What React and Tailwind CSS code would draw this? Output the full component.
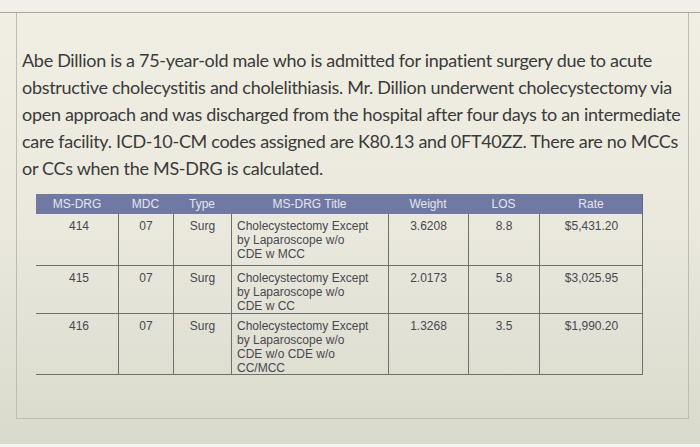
import React from "react";

const rows = [
  { drg: "414", mdc: "07", type: "Surg", title: ["Cholecystectomy Except", "by Laparoscope w/o", "CDE w MCC"], weight: "3.6208", los: "8.8", rate: "$5,431.20", h: "h-[52px]" },
  { drg: "415", mdc: "07", type: "Surg", title: ["Cholecystectomy Except", "by Laparoscope w/o", "CDE w CC"], weight: "2.0173", los: "5.8", rate: "$3,025.95", h: "h-[48px]" },
  { drg: "416", mdc: "07", type: "Surg", title: ["Cholecystectomy Except", "by Laparoscope w/o", "CDE w/o CDE w/o", "CC/MCC"], weight: "1.3268", los: "3.5", rate: "$1,990.20", h: "h-[61px]" },
];

const cols = "grid grid-cols-[82px_55px_58px_157px_80px_71px_104px]";

export default function App() {
  return (
    <div className="w-[700px] h-[447px] overflow-hidden bg-linear-to-b from-[#f1eee4] via-[#ebe9de] to-[#d9d9cc] flex flex-col">
      <div className="h-[13px] shrink-0 border-b border-[#a9a8a2] bg-[#f2efe7]" />
      <div className="ml-[16px] w-[673px] h-[406px] shrink-0 border-l border-r border-b border-[#bdbcb3] flex flex-col">
        <p
          className="mt-[34px] pl-[5px] text-[18px] leading-[27px] text-[#3a3a3a] whitespace-nowrap tracking-[-0.3px]"
          style={{ fontFamily: "Lato, 'Open Sans', sans-serif" }}
        >
          Abe Dillion is a 75-year-old male who is admitted for inpatient surgery due to acute
          <br />
          obstructive cholecystitis and cholelithiasis. Mr. Dillion underwent cholecystectomy via
          <br />
          open approach and was discharged from the hospital after four days to an intermediate
          <br />
          care facility. ICD-10-CM codes assigned are K80.13 and 0FT40ZZ. There are no MCCs
          <br />
          or CCs when the MS-DRG is calculated.
        </p>
        <div
          className="mt-[12px] ml-[19px] w-[607px] text-[12px] leading-[14px] text-[#48484f]"
          style={{ fontFamily: "'Liberation Sans', Arial, sans-serif" }}
        >
          <div className={`${cols} h-[20px] items-center bg-[#7079a3] text-[#e4e5f0] border-r border-[#5f6690]`}>
            <div className="text-center">MS-DRG</div>
            <div className="text-center">MDC</div>
            <div className="text-center">Type</div>
            <div className="text-center">MS-DRG Title</div>
            <div className="text-center">Weight</div>
            <div className="text-center">LOS</div>
            <div className="text-center">Rate</div>
          </div>
          {rows.map((r) => (
            <div key={r.drg} className={`${cols} ${r.h} border-b border-r border-[#707070]`}>
              <div className="text-center pt-[5px] pl-[4px]">{r.drg}</div>
              <div className="text-center pt-[5px] border-l border-[#707070]">{r.mdc}</div>
              <div className="text-center pt-[5px] border-l border-[#707070]">{r.type}</div>
              <div className="pt-[5px] pl-[5px] border-l border-[#707070]">
                {r.title.map((t) => (
                  <div key={t}>{t}</div>
                ))}
              </div>
              <div className="text-center pt-[5px] border-l border-[#707070]">{r.weight}</div>
              <div className="text-center pt-[5px] border-l border-[#707070]">{r.los}</div>
              <div className="text-center pt-[5px] border-l border-[#707070]">{r.rate}</div>
            </div>
          ))}
        </div>
      </div>
      <div className="flex-1" />
      <div className="h-[3px] bg-[#f3f3ef]" />
    </div>
  );
}
